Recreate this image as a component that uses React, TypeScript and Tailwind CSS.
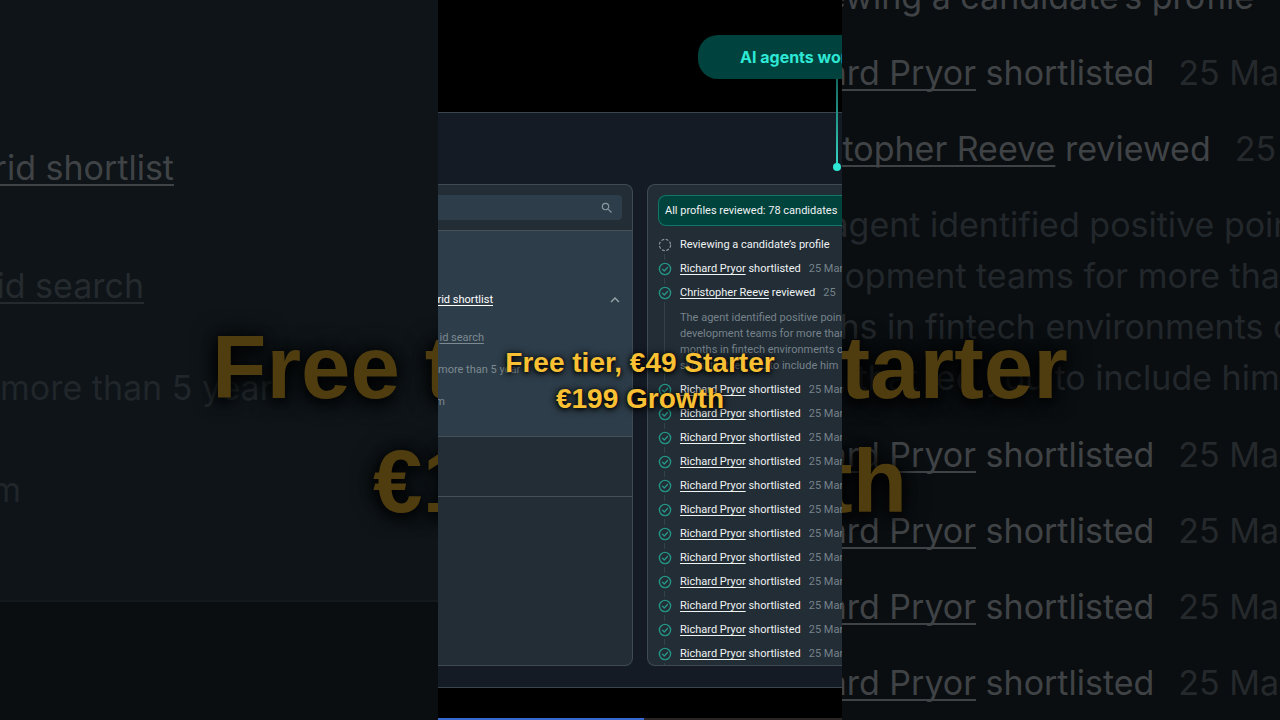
import { MdExpandLess, MdSearch } from "react-icons/md";

const shortlisted = Array.from({ length: 12 }, (_, index) => index);

const CheckMark = () => (
	<svg className="relative size-3.5 shrink-0 bg-[#222d36] ring-2 ring-[#222d36]" viewBox="0 0 14 14" fill="none" stroke="#259485" strokeWidth="1.4">
		<circle cx="7" cy="7" r="5.6" />
		<path d="M4.5 7.2 6.3 8.9 9.5 5.5" strokeLinecap="round" strokeLinejoin="round" />
	</svg>
);

const PendingMark = () => (
	<svg className="relative size-3.5 shrink-0 bg-[#222d36] ring-2 ring-[#222d36]" viewBox="0 0 14 14" fill="none" stroke="#8b959b" strokeWidth="1.2">
		<circle cx="7" cy="7" r="5.6" strokeDasharray="2.9 1.5" />
	</svg>
);

type EntryProps = { name: string; action: string; date: string };

const Entry = ({ name, action, date }: EntryProps) => (
	<li className="flex h-6 items-center gap-2 whitespace-nowrap">
		<CheckMark />
		<p>
			<a href="#candidate" className="underline underline-offset-2">{name}</a> {action}
		</p>
		<time className="text-[#76828a]">{date}</time>
	</li>
);

const BackdropEntry = ({ name, action, date }: EntryProps) => (
	<li className="flex h-[76px] items-center gap-6 whitespace-nowrap">
		<p>
			<span className="underline decoration-2 underline-offset-4">{name}</span> {action}
		</p>
		<span className="text-[#25292c]">{date}</span>
	</li>
);

const BackdropLeft = () => (
	<div className="overflow-hidden bg-[#0a0e11] font-[Inter,sans-serif] text-[34px] leading-[50px] whitespace-nowrap text-[#20262a]">
		<div className="h-[602px] border-b-2 border-[#14191d] bg-[#0e1418] pt-[143px]">
			<p className="flex w-[174px] justify-end text-[#404346] underline decoration-2 underline-offset-4">rid shortlist</p>
			<p className="mt-[68px] flex w-[144px] justify-end text-[#252a2e] underline decoration-2 underline-offset-4">id search</p>
			<p className="mt-[52px]">more than 5 year</p>
			<p className="mt-[52px] flex w-[21px] justify-end">m</p>
		</div>
	</div>
);

const BackdropRight = () => (
	<div className="overflow-hidden bg-[#0a0e11] font-[Inter,sans-serif] text-[34px] text-[#404346]">
		<ul className="-mt-[42px] -ml-[84px]">
			<li className="flex h-[76px] items-center whitespace-nowrap">Reviewing a candidate’s profile</li>
			<BackdropEntry name="Richard Pryor" action="shortlisted" date="25 Mar" />
			<BackdropEntry name="Christopher Reeve" action="reviewed" date="25" />
			<li className="py-[13px] leading-[51px] whitespace-nowrap text-[#22272b]">
				<p>The agent identified positive poin</p>
				<p>development teams for more than</p>
				<p>months in fintech environments o</p>
				<p>skills, that led you to include him</p>
			</li>
			{shortlisted.slice(0, 4).map((index) => (
				<BackdropEntry key={index} name="Richard Pryor" action="shortlisted" date="25 Mar" />
			))}
		</ul>
	</div>
);

const SearchPanel = () => (
	<section className="w-[195px] shrink-0 overflow-hidden rounded-r-lg border border-l-0 border-[#3e4a54] bg-[#222d36]">
		<div className="border-b border-[#44515b] py-2.5 pr-2.5">
			<label className="flex h-[25px] items-center rounded-r-sm bg-[#2d3d49] pr-2">
				<input type="text" aria-label="Search" className="min-w-0 grow bg-transparent outline-none" />
				<MdSearch className="size-3.5 text-[#8b979f]" />
			</label>
		</div>
		<div className="h-[206px] border-b border-[#44515b] bg-[#2d3d49] pt-[60px] pr-2 text-[#7d8a92]">
			<div className="flex items-center justify-between">
				<a href="#shortlist" className="flex w-[55px] justify-end whitespace-nowrap text-white underline underline-offset-2">rid shortlist</a>
				<button type="button" aria-label="Collapse">
					<MdExpandLess className="size-[18px] text-[#98a3aa]" />
				</button>
			</div>
			<a href="#search" className="mt-5 flex w-[46px] justify-end whitespace-nowrap underline underline-offset-2">id search</a>
			<p className="mt-3.5">more than 5 year</p>
			<p className="mt-3.5 flex w-[7px] justify-end">m</p>
		</div>
		<div className="h-[60px] border-b border-[#44515b]" />
	</section>
);

const ActivityPanel = () => (
	<section className="min-w-0 grow overflow-hidden rounded-l-lg border border-r-0 border-[#3e4a54] bg-[#222d36] pt-2.5 pl-2.5 text-[#f0f3f4]">
		<p className="flex h-[31px] items-center rounded-l-lg border border-r-0 border-[#10766a] bg-[#00423c] pl-1.5 whitespace-nowrap">
			All profiles reviewed: 78 candidates
		</p>
		<ul className="relative mt-[7px] before:absolute before:top-3 before:bottom-0 before:left-[6px] before:w-px before:bg-[#34414a]">
			<li className="flex h-6 items-center gap-2 whitespace-nowrap">
				<PendingMark />
				<p>Reviewing a candidate’s profile</p>
			</li>
			<Entry name="Richard Pryor" action="shortlisted" date="25 Mar" />
			<Entry name="Christopher Reeve" action="reviewed" date="25" />
			<li className="pt-[5px] pb-1 pl-[22px] leading-4 whitespace-nowrap text-[#76828a]">
				<p>The agent identified positive poin</p>
				<p>development teams for more than</p>
				<p>months in fintech environments o</p>
				<p>skills, that led you to include him</p>
			</li>
			{shortlisted.map((index) => (
				<Entry key={index} name="Richard Pryor" action="shortlisted" date="25 Mar" />
			))}
		</ul>
	</section>
);

const Frame = () => (
	<main className="relative z-10 flex flex-col overflow-hidden bg-black text-[11px] leading-[18px]">
		<header className="flex h-28 justify-end pt-[35px]">
			<p className="flex h-11 w-36 items-center rounded-l-[20px] bg-[#00423d] pl-[42px] font-[Inter,sans-serif] text-base font-bold whitespace-nowrap text-[#2ee8d5]">
				AI agents wor
			</p>
		</header>
		<div className="absolute top-[79px] right-1 h-[88px] w-0.5 bg-gradient-to-b from-[#13685e] to-[#36d9c6]" />
		<div className="absolute top-[163px] right-px size-2 rounded-full bg-[#2ee8d5]" />
		<div className="flex h-[576px] gap-3.5 border-y border-[#3b454f] bg-[#141b25] pt-[71px] pb-[21px]">
			<SearchPanel />
			<ActivityPanel />
		</div>
		<div className="mt-auto h-0.5 bg-[#282524]">
			<div className="h-full w-[51%] bg-[#3569cf]" />
		</div>
	</main>
);

const App = () => (
	<div className="relative grid h-screen min-h-[720px] grid-cols-[minmax(0,1fr)_404px_minmax(0,1fr)] overflow-hidden bg-black font-[Roboto,sans-serif] [text-decoration-skip-ink:none]">
		<BackdropLeft />
		<Frame />
		<BackdropRight />
		<p className="absolute inset-x-0 top-[310px] text-center font-['Liberation_Sans',sans-serif] text-[89px] leading-[114px] font-bold whitespace-nowrap text-[#4f3d0f] [text-shadow:0_4px_14px_#000,0_0_24px_#000]">
			Free tier, €49 Starter
			<br />
			€199 Growth
		</p>
		<h1 className="absolute inset-x-0 top-[345px] z-20 text-center font-['Liberation_Sans',sans-serif] text-[28px] leading-9 font-bold text-[#f9c033] [text-shadow:0_1px_4px_#000,0_1px_8px_#000]">
			Free tier, €49 Starter
			<br />
			€199 Growth
		</h1>
	</div>
);

export default App;
